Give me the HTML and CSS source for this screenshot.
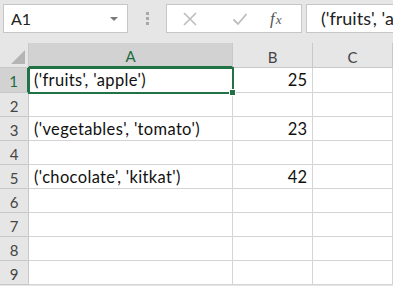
FILE: index.html
```html
<!DOCTYPE html>
<html>
<head>
<meta charset="utf-8">
<link rel="stylesheet" href="styles.css">
</head>
<body>
<div class="toolbar">
  <div class="namebox"><span class="ref">A1</span><span class="caret"></span></div>
  <div class="grip"><i></i><i></i><i></i></div>
  <div class="fbuttons">
    <svg class="ico-x" width="16" height="16" viewBox="0 0 16 16"><path d="M2 2 L14 14 M14 2 L2 14" stroke="#bdbdbd" stroke-width="1.6" fill="none"/></svg>
    <svg class="ico-check" width="16" height="16" viewBox="0 0 16 16"><path d="M1.5 8.5 L6 13 L14.5 3" stroke="#bdbdbd" stroke-width="1.8" fill="none"/></svg>
    <span class="fx">f<sub>x</sub></span>
  </div>
  <div class="finput">('fruits', 'apple')</div>
</div>
<div class="sheet">
  <div class="corner"><span class="tri"></span></div>
  <div class="ch sel">A</div>
  <div class="ch">B</div>
  <div class="ch">C</div>

  <div class="rh sel">1</div>
  <div class="c active">('fruits', 'apple')<span class="handle"></span></div>
  <div class="c num">25</div>
  <div class="c"></div>

  <div class="rh">2</div><div class="c"></div><div class="c"></div><div class="c"></div>

  <div class="rh">3</div>
  <div class="c">('vegetables', 'tomato')</div>
  <div class="c num">23</div>
  <div class="c"></div>

  <div class="rh">4</div><div class="c"></div><div class="c"></div><div class="c"></div>

  <div class="rh">5</div>
  <div class="c">('chocolate', 'kitkat')</div>
  <div class="c num">42</div>
  <div class="c"></div>

  <div class="rh">6</div><div class="c"></div><div class="c"></div><div class="c"></div>
  <div class="rh">7</div><div class="c"></div><div class="c"></div><div class="c"></div>
  <div class="rh">8</div><div class="c"></div><div class="c"></div><div class="c"></div>
  <div class="rh">9</div><div class="c"></div><div class="c"></div><div class="c"></div>
</div>
</body>
</html>
```
FILE: styles.css
```css
html, body {
  margin: 0;
  padding: 0;
  background: #e6e6e6;
  overflow: hidden;
  font-family: Lato, "Open Sans", "Liberation Sans", sans-serif;
}
.toolbar {
  height: 43px;
  box-sizing: border-box;
  padding: 4px 0 0 3px;
  display: flex;
  align-items: flex-start;
  background: #e6e6e6;
}
.namebox {
  width: 125px;
  height: 29px;
  box-sizing: border-box;
  background: #fff;
  border: 1px solid #c6c6c6;
  display: flex;
  align-items: center;
  justify-content: space-between;
  padding: 0 9px 0 7px;
}
.ref {
  font-size: 16px;
  color: #222;
}
.caret {
  width: 0;
  height: 0;
  border-left: 4px solid transparent;
  border-right: 4px solid transparent;
  border-top: 4px solid #7a7a7a;
}
.grip {
  width: 38px;
  height: 29px;
  display: flex;
  flex-direction: column;
  align-items: center;
  justify-content: center;
  gap: 2px;
}
.grip i {
  display: block;
  width: 3px;
  height: 3px;
  background: #a8a8a8;
}
.fbuttons {
  width: 136px;
  height: 29px;
  box-sizing: border-box;
  background: #fff;
  border: 1px solid #c6c6c6;
  display: flex;
  align-items: center;
  padding-left: 15px;
}
.ico-x { margin-right: 34px; }
.ico-check { margin-right: 22px; }
.fx {
  font-family: "Liberation Serif", serif;
  font-style: italic;
  font-size: 17px;
  color: #555;
  line-height: 1;
}
.fx sub {
  font-size: 13px;
  vertical-align: 0;
  margin-left: 1px;
}
.finput {
  margin-left: 4px;
  flex: 1;
  min-width: 0;
  height: 29px;
  box-sizing: border-box;
  background: #fff;
  border: 1px solid #c6c6c6;
  border-right: none;
  padding: 2px 0 0 14px;
  font-size: 18px;
  color: #222;
  white-space: nowrap;
  overflow: hidden;
}
.sheet {
  display: grid;
  grid-template-columns: 29px 204px 80px 1fr;
  grid-template-rows: 25px 25px repeat(8, 24px);
  background: #fff;
}
.corner {
  position: relative;
  background: #e6e6e6;
  border-right: 1px solid #c8c8c8;
  border-bottom: 1px solid #c8c8c8;
}
.tri {
  position: absolute;
  right: 3px;
  bottom: 3px;
  width: 0;
  height: 0;
  border-left: 14px solid transparent;
  border-bottom: 14px solid #b5b5b5;
}
.ch {
  background: #e6e6e6;
  border-right: 1px solid #c8c8c8;
  border-bottom: 1px solid #c8c8c8;
  display: flex;
  align-items: center;
  justify-content: center;
  font-size: 15px;
  color: #444;
  padding-top: 3px;
  box-sizing: border-box;
}
.ch.sel {
  background: #d2d2d2;
  color: #1e6b40;
  border-bottom: 2px solid #217346;
}
.rh {
  background: #e6e6e6;
  border-right: 1px solid #c8c8c8;
  border-bottom: 1px solid #c8c8c8;
  display: flex;
  align-items: center;
  justify-content: center;
  font-size: 15px;
  color: #444;
  padding-top: 2px;
  box-sizing: border-box;
}
.rh.sel {
  background: #d2d2d2;
  color: #1e6b40;
  border-right: 2px solid #217346;
}
.c {
  border-right: 1px solid #d4d4d4;
  border-bottom: 1px solid #d4d4d4;
  font-size: 16.5px;
  letter-spacing: 0.35px;
  color: #111;
  padding: 2px 0 0 5px;
  white-space: nowrap;
  box-sizing: border-box;
}
.c.num {
  text-align: right;
  padding: 2px 5px 0 0;
  letter-spacing: 0;
}
.c.active {
  position: relative;
  overflow: visible;
  outline: 2px solid #217346;
  outline-offset: -1px;
  z-index: 1;
}
.handle {
  position: absolute;
  right: -4px;
  bottom: -4px;
  width: 5px;
  height: 5px;
  background: #217346;
  border: 1px solid #fff;
}
```
